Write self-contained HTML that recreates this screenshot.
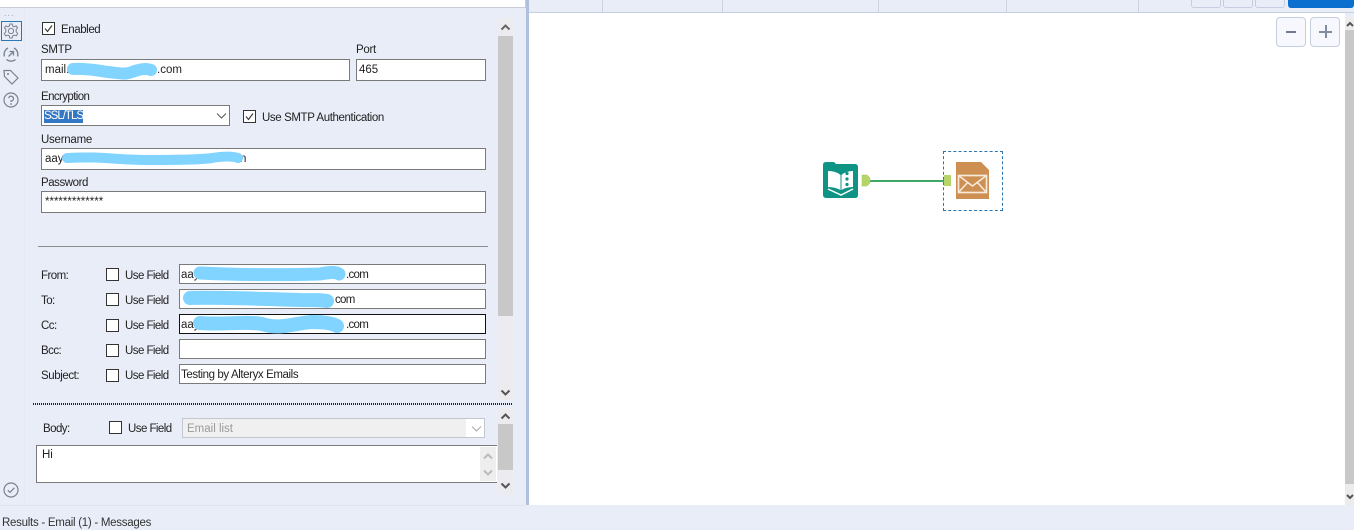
<!DOCTYPE html>
<html><head><meta charset="utf-8"><style>
html,body{margin:0;padding:0}
body{width:1354px;height:528px;overflow:hidden;background:#e9edf8;position:relative;font-family:"Liberation Sans",sans-serif;font-size:11.5px;color:#222}
div{position:absolute;box-sizing:border-box}
.t{white-space:nowrap;line-height:14px;height:14px}
.l{letter-spacing:-.42px}
.u{letter-spacing:-.55px}
.m{letter-spacing:-.7px}
.i{background:#fff;border:1px solid #7a7a7a;border-width:1px}
.c{width:13px;height:13px;background:#fff;border:1px solid #333}
svg{position:absolute;overflow:visible}
</style></head><body>
<div style="left:0;top:0;width:526px;height:7px;background:#fff"></div>
<div style="left:0;top:7px;width:526px;height:1px;background:#c9cdd6"></div>
<div style="left:525px;top:0;width:1px;height:8px;background:#c9cdd6"></div>
<div style="left:526px;top:0;width:3px;height:505px;background:#afc0dd"></div>
<div style="left:24px;top:8px;width:1px;height:497px;background:#e5e9f3"></div>
<div style="left:0;top:505px;width:526px;height:1px;background:#dfe3ea"></div>

<!-- top bar -->
<div style="left:529px;top:0;width:825px;height:13px;background:#e9edf8;border-bottom:1px solid #c6cde0"></div>
<div style="left:602px;top:0;width:1px;height:12px;background:#ccd2e0"></div>
<div style="left:722px;top:0;width:1px;height:12px;background:#ccd2e0"></div>
<div style="left:878px;top:0;width:1px;height:12px;background:#ccd2e0"></div>
<div style="left:1006px;top:0;width:1px;height:12px;background:#ccd2e0"></div>
<div style="left:1138px;top:0;width:1px;height:12px;background:#ccd2e0"></div>
<div style="left:1191px;top:-4px;width:30px;height:12px;border:1px solid #c6cde0;border-radius:3px"></div>
<div style="left:1223px;top:-4px;width:30px;height:12px;border:1px solid #c6cde0;border-radius:3px"></div>
<div style="left:1255px;top:-4px;width:30px;height:12px;border:1px solid #c6cde0;border-radius:3px"></div>
<div style="left:1288px;top:-4px;width:66px;height:12px;background:#0b6fd0;border-radius:3px"></div>

<!-- canvas -->
<div style="left:529px;top:13px;width:816px;height:492px;background:#fff"></div>
<div style="left:1345px;top:18px;width:9px;height:487px;background:#ececec"></div>
<div style="left:1345px;top:30px;width:9px;height:454px;background:#c8c8c8"></div>
<svg style="left:1345px;top:18px" width="9" height="12"><path d="M2 8l3-3 3 3" fill="none" stroke="#555" stroke-width="2"/></svg>
<svg style="left:1345px;top:490px" width="9" height="12"><path d="M2 5l3 3 3-3" fill="none" stroke="#555" stroke-width="2"/></svg>

<div style="left:1276px;top:17px;width:30px;height:30px;background:#f6f8fd;border:1px solid #c6cfe0;border-radius:4px"></div>
<div style="left:1310px;top:17px;width:30px;height:30px;background:#f6f8fd;border:1px solid #c6cfe0;border-radius:4px"></div>
<div style="left:1286px;top:31px;width:10px;height:2px;background:#6f7a90"></div>
<div style="left:1319px;top:31px;width:13px;height:2px;background:#828ca0"></div>
<div style="left:1325px;top:25px;width:1px;height:13px;background:#828ca0;box-shadow:1px 0 0 #828ca0"></div>

<!-- workflow -->
<div style="left:943px;top:151px;width:60px;height:60px;border:1px dashed #2a75b0"></div>
<div style="left:869px;top:180px;width:77px;height:2px;background:#3fa866"></div>
<svg style="left:862px;top:175px" width="9" height="11"><path d="M0 0H5L8 3V8L5 11H0Z" fill="#b5d56a" stroke="#a0c658" stroke-width=".5"/></svg>
<div style="left:944px;top:175px;width:7px;height:11px;background:#b5d56a"></div>
<svg style="left:823px;top:162px" width="36" height="37" viewBox="0 0 36 37">
<path d="M3 0H11L13 2H32Q35 2 35 5V33Q35 36 32 36H4Q0 36 0 33V3Q0 0 3 0Z" fill="#0e9384"/>
<path d="M5 9Q13 9 17.5 13V28Q12 25 5 25Z" fill="#fff"/>
<path d="M18.5 13Q23 9 30 9V25Q23 25 18.5 28Z" fill="#fff"/>
<path d="M5 27L18 33L30 27" fill="none" stroke="#fff" stroke-width="1.5"/>
<circle cx="24" cy="11.5" r="1.6" fill="#0e9384"/><circle cx="24" cy="17" r="1.6" fill="#0e9384"/><circle cx="24" cy="22.5" r="1.6" fill="#0e9384"/>
</svg>
<svg style="left:956px;top:162px" width="33" height="37" viewBox="0 0 33 37">
<path d="M0 0H25L33 8V37H0Z" fill="#cd8f52"/>
<rect x="2.5" y="13.5" width="28" height="17" fill="none" stroke="#f6eadc" stroke-width="1.7"/>
<path d="M2.5 13.5L16.5 24L30.5 13.5M2.5 30.5L12 20M30.5 30.5L21 20" fill="none" stroke="#f6eadc" stroke-width="1.6"/>
</svg>

<!-- side icons -->
<div style="left:1px;top:21px;width:21px;height:20px;border:1px solid #2a7ab0"></div>
<div class="t" style="left:4px;top:8px;font-size:9px;color:#9aa2b0;letter-spacing:1px;line-height:10px">...</div>
<svg style="left:3px;top:23px" width="16" height="16" viewBox="0 0 16 16"><circle cx="8" cy="8" r="2.6" fill="none" stroke="#7a8290"/><path d="M6.8 1H9.2L9.6 3 11.3 3.8 13.1 2.8 14.6 4.8 13.2 6.2V8.8L14.7 10.6 13.2 12.9 11.3 12.1 9.6 13 9.2 15H6.8L6.4 13 4.7 12.1 2.8 12.9 1.3 10.6 2.8 8.8V6.2L1.4 4.8 2.9 2.8 4.7 3.8 6.4 3Z" fill="none" stroke="#7a8290"/></svg>
<svg style="left:3px;top:46px" width="16" height="16" viewBox="0 0 16 16"><path d="M1.5 10.5A7 7 0 0 1 5 2M11 2A7 7 0 0 1 14.5 10.5M12.5 13.5A7 7 0 0 1 3.5 13.5" fill="none" stroke="#7a8290" stroke-width="1.3"/><path d="M5.5 10.5L10.5 5.5M6.5 5.5H10.5V9.5" fill="none" stroke="#7a8290" stroke-width="1.3"/></svg>
<svg style="left:3px;top:69px" width="16" height="16" viewBox="0 0 16 16"><path d="M1 1.5H7.5L15 9 9 15 1.5 7.5Z" fill="none" stroke="#7a8290" stroke-width="1.2"/><circle cx="5" cy="5" r="1" fill="#7a8290"/></svg>
<svg style="left:3px;top:92px" width="16" height="16" viewBox="0 0 16 16"><circle cx="8" cy="8" r="7" fill="none" stroke="#7a8290" stroke-width="1.2"/><path d="M5.7 6.2A2.4 2.4 0 1 1 8 9V10" fill="none" stroke="#7a8290" stroke-width="1.3"/><circle cx="8" cy="12" r=".9" fill="#7a8290"/></svg>
<svg style="left:3px;top:482px" width="16" height="16" viewBox="0 0 16 16"><circle cx="8" cy="8" r="7" fill="none" stroke="#7a8290" stroke-width="1.2"/><path d="M4.8 8.2L7 10.4 11.4 5.8" fill="none" stroke="#7a8290" stroke-width="1.2"/></svg>

<!-- top form -->
<div class="c" style="left:42px;top:22px"></div>
<svg style="left:42px;top:22px" width="13" height="13"><path d="M3 6.5L5.5 9.5 10 3.5" fill="none" stroke="#333" stroke-width="1.1"/></svg>
<div class="t l" style="left:61px;top:23px">Enabled</div>
<div class="t" style="left:41px;top:43px;letter-spacing:-.3px">SMTP</div>
<div class="t" style="left:356px;top:43px;letter-spacing:-.3px">Port</div>
<div class="i" style="left:41px;top:59px;width:309px;height:22px"></div>
<div class="t" style="left:45px;top:63px">mail.</div>
<div class="t" style="left:157px;top:63px">.com</div>
<div class="i" style="left:356px;top:59px;width:130px;height:22px"></div>
<div class="t" style="left:359px;top:63px">465</div>
<div class="t" style="left:41px;top:90px;letter-spacing:-.6px">Encryption</div>
<div class="i" style="left:41px;top:105px;width:189px;height:21px"></div>
<div style="left:44px;top:110px;width:39px;height:13px;background:#3478c4"></div>
<div class="t" style="left:44px;top:110px;color:#fff;height:13px;line-height:13px;letter-spacing:-1px">SSL/TLS</div>
<svg style="left:216px;top:112px" width="12" height="8"><path d="M1 1.5L5.5 6 10 1.5" fill="none" stroke="#555"/></svg>
<div class="c" style="left:243px;top:110px"></div>
<svg style="left:243px;top:110px" width="13" height="13"><path d="M3 6.5L5.5 9.5 10 3.5" fill="none" stroke="#333" stroke-width="1.1"/></svg>
<div class="t" style="left:262px;top:111px;letter-spacing:-.39px">Use SMTP Authentication</div>
<div class="t" style="left:41px;top:133px;letter-spacing:-.25px">Username</div>
<div class="i" style="left:41px;top:148px;width:445px;height:22px"></div>
<div class="t" style="left:45px;top:152px">aay</div>
<div class="t" style="left:240px;top:152px">n</div>
<div class="t" style="left:41px;top:176px;letter-spacing:-.45px">Password</div>
<div class="i" style="left:41px;top:191px;width:445px;height:22px"></div>
<div class="t" style="left:45px;top:195px">*************</div>
<div style="left:38px;top:246px;width:450px;height:1px;background:#8c8c8c"></div>

<div class="t u" style="left:41px;top:269px">From:</div>
<div class="t u" style="left:41px;top:294px">To:</div>
<div class="t u" style="left:41px;top:319px">Cc:</div>
<div class="t u" style="left:41px;top:344px">Bcc:</div>
<div class="t l" style="left:41px;top:369px">Subject:</div>
<div class="c" style="left:106px;top:268px"></div>
<div class="c" style="left:106px;top:293px"></div>
<div class="c" style="left:106px;top:319px"></div>
<div class="c" style="left:106px;top:344px"></div>
<div class="c" style="left:106px;top:369px"></div>
<div class="t u" style="left:125px;top:269px">Use Field</div>
<div class="t u" style="left:125px;top:294px">Use Field</div>
<div class="t u" style="left:125px;top:319px">Use Field</div>
<div class="t u" style="left:125px;top:344px">Use Field</div>
<div class="t u" style="left:125px;top:369px">Use Field</div>
<div class="i" style="left:179px;top:264px;width:307px;height:20px"></div>
<div class="i" style="left:179px;top:289px;width:307px;height:20px"></div>
<div class="i" style="left:179px;top:314px;width:307px;height:20px;border-color:#111"></div>
<div class="i" style="left:179px;top:339px;width:307px;height:20px"></div>
<div class="i" style="left:179px;top:364px;width:307px;height:20px"></div>
<div class="t" style="left:181px;top:268px">aay</div>
<div class="t m" style="left:346px;top:268px">.com</div>
<div class="t m" style="left:335px;top:293px">com</div>
<div class="t" style="left:181px;top:318px">aay</div>
<div class="t m" style="left:346px;top:318px">.com</div>
<div class="t" style="left:181px;top:368px;letter-spacing:-.4px">Testing by Alteryx Emails</div>

<!-- scribbles -->
<svg style="left:0;top:0" width="1354" height="528">
<g fill="none" stroke="#80d4ff" stroke-linecap="round" stroke-linejoin="round">
<path d="M73 69C88 68 100 71 108 72C118 73 125 75 132 72C140 69 146 68 151 70" stroke-width="12"/>
<path d="M67 158C100 156 118 160 145 160C170 160 198 160 212 158C224 156 232 156 238 158" stroke-width="10"/>
<path d="M200 273C240 275 290 275 320 274C330 272 336 272 339 274" stroke-width="13"/>
<path d="M190 298C220 297 260 299 300 300C315 300 322 300 327 301" stroke-width="14"/>
<path d="M200 323C225 325 245 321 262 324C280 330 295 323 312 322C322 322 332 323 337 326" stroke-width="14"/>
</g></svg>

<!-- scrollbars -->
<div style="left:498px;top:18px;width:15px;height:382px;background:#ececf0"></div>
<div style="left:498px;top:36px;width:15px;height:280px;background:#c8c8c8"></div>
<svg style="left:498px;top:23px" width="15" height="9"><path d="M3.5 6.5L7.5 2.5 11.5 6.5" fill="none" stroke="#666" stroke-width="2"/></svg>
<svg style="left:498px;top:388px" width="15" height="9"><path d="M3.5 2.5L7.5 6.5 11.5 2.5" fill="none" stroke="#555" stroke-width="2"/></svg>
<div style="left:33px;top:403px;width:480px;height:2px;background-image:repeating-linear-gradient(90deg,#222 0 1px,transparent 1px 2px)"></div>
<div style="left:498px;top:408px;width:15px;height:87px;background:#ececf0"></div>
<div style="left:498px;top:424px;width:15px;height:46px;background:#c8c8c8"></div>
<svg style="left:498px;top:412px" width="15" height="9"><path d="M3.5 6.5L7.5 2.5 11.5 6.5" fill="none" stroke="#555" stroke-width="2"/></svg>
<svg style="left:498px;top:481px" width="15" height="9"><path d="M3.5 2.5L7.5 6.5 11.5 2.5" fill="none" stroke="#555" stroke-width="2"/></svg>

<!-- body -->
<div class="t u" style="left:43px;top:422px">Body:</div>
<div class="c" style="left:109px;top:421px"></div>
<div class="t u" style="left:128px;top:422px">Use Field</div>
<div style="left:182px;top:418px;width:303px;height:20px;background:#f0f0f0;border:1px solid #c3c7d0"></div>
<div style="left:466px;top:419px;width:18px;height:18px;background:#fff"></div>
<svg style="left:471px;top:425px" width="12" height="8"><path d="M1 1.5L5.5 6 10 1.5" fill="none" stroke="#aaa"/></svg>
<div class="t" style="left:187px;top:422px;color:#9a9a9a">Email list</div>
<div style="left:36px;top:445px;width:461px;height:38px;background:#fff;border:1px solid #7a7a7a;border-right:0"></div>
<div class="t" style="left:42px;top:448px">Hi</div>
<div style="left:480px;top:447px;width:16px;height:34px;background:#eeeeee"></div>
<svg style="left:480px;top:452px" width="16" height="9"><path d="M4 6.5L8 2.5 12 6.5" fill="none" stroke="#bbb" stroke-width="2"/></svg>
<svg style="left:480px;top:468px" width="16" height="9"><path d="M4 2.5L8 6.5 12 2.5" fill="none" stroke="#bbb" stroke-width="2"/></svg>

<div class="t" style="left:2px;top:516px;color:#333;letter-spacing:-.27px">Results - Email (1) - Messages</div>
</body></html>
